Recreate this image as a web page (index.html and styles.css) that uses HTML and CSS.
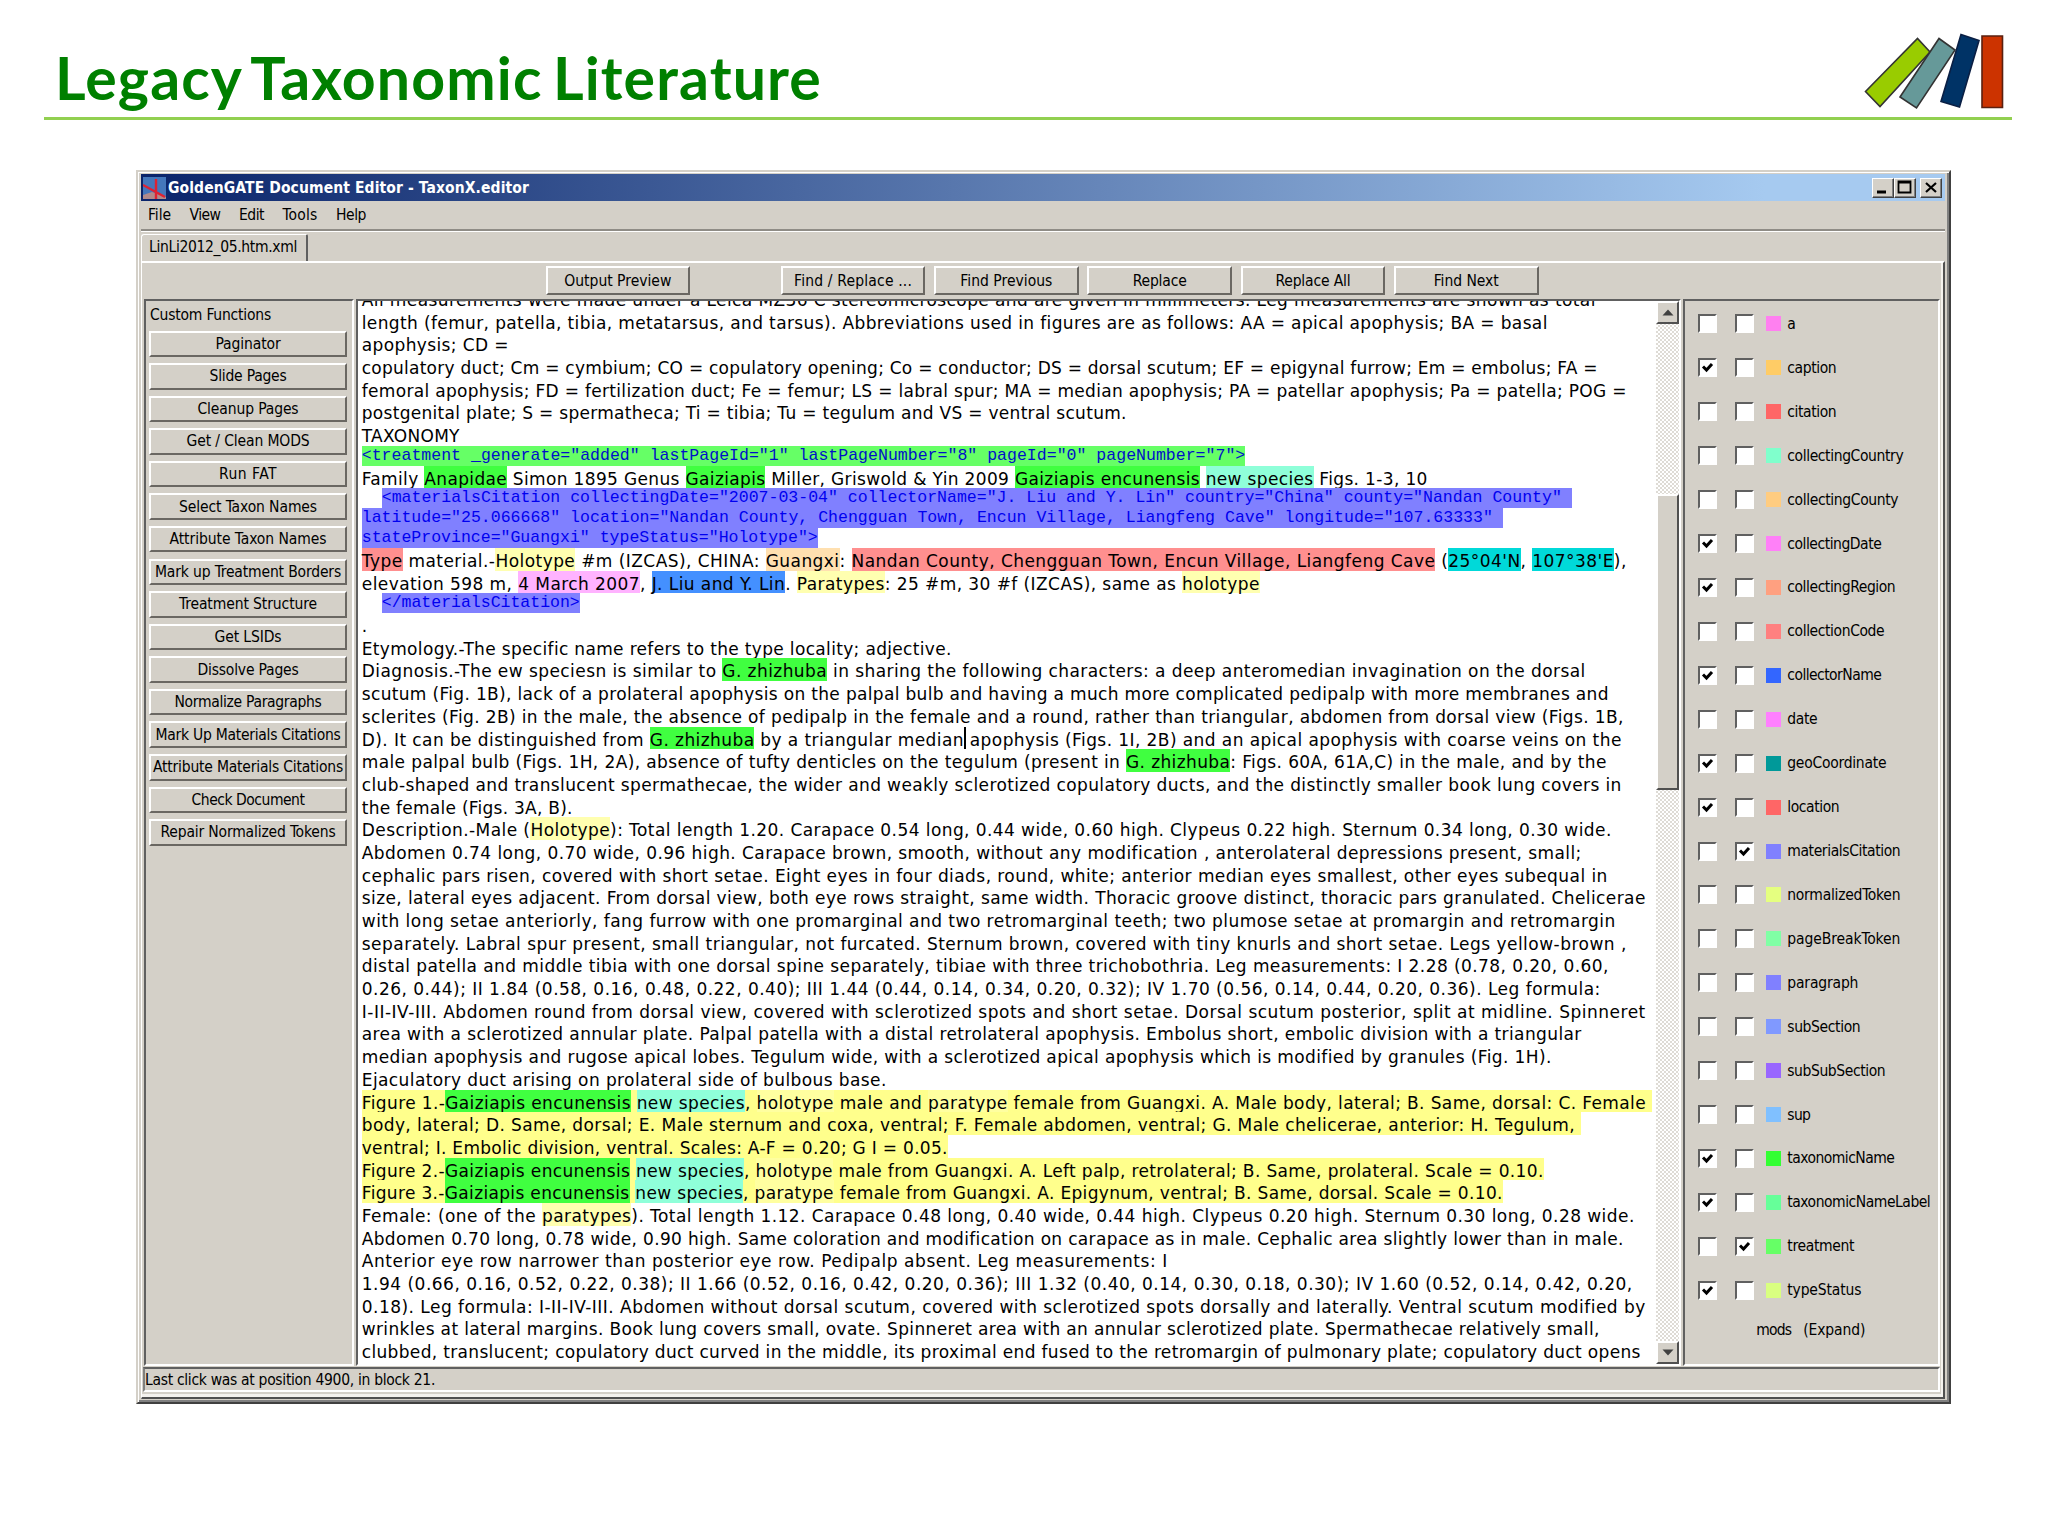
FILE: index.html
```html
<!DOCTYPE html>
<html lang="en">
<head>
<meta charset="UTF-8">
<title>Legacy Taxonomic Literature</title>
<link rel="stylesheet" href="styles.css">
</head>
<body>

<header class="slide-header">
  <h1><span data-w="767">Legacy Taxonomic Literature</span></h1>
  <svg class="logo" width="144" height="80" viewBox="0 0 144 80">
    <g stroke="#333" stroke-width="1.6">
      <path fill="#99cc00" d="M3.500 59.500 L55.500 6.500 L68 20 L18 74.500 Z"/>
      <path fill="#669999" d="M38 65 L77 6.500 L93 18 L54.500 76 Z"/>
      <path fill="#003366" stroke="#0a1f44" d="M79 69.500 L99 2.500 L117 8.500 L97.500 75 Z"/>
      <path fill="#cc3300" stroke="#5a2010" d="M120 4 H140.500 V75.500 H120 Z"/>
    </g>
  </svg>
</header>

<div class="window">
  <div class="titlebar">
    <svg class="app-icon" width="23" height="22" viewBox="0 0 23 22">
      <rect width="23" height="22" fill="#4477bb"/>
      <path d="M0 22 V18 L9 15 L23 20 V22 Z" fill="#b08a8a"/>
      <path d="M13 2 V22 M0 8 L22 20" stroke="#dd2233" stroke-width="2.400" fill="none"/>
    </svg>
    <span class="title" data-w="361">GoldenGATE Document Editor - TaxonX.editor</span>
    <div class="win-buttons">
      <span class="win-btn"><svg width="20" height="18"><path d="M4 13h9" stroke="#000" stroke-width="3"/></svg></span>
      <span class="win-btn"><svg width="20" height="18"><path d="M3.500 2.500h12v11h-12z M3 3.500h13" stroke="#000" stroke-width="1.800" fill="none"/></svg></span>
      <span class="win-btn close"><svg width="20" height="18"><path d="M5 4l10 9M15 4l-10 9" stroke="#000" stroke-width="2.200"/></svg></span>
    </div>
  </div>

  <nav class="menu">
    <span data-w="23">File</span><span data-w="31">View</span><span data-w="25">Edit</span><span data-w="35">Tools</span><span data-w="30">Help</span>
  </nav>

  <div class="tabs"><div class="tab"><span data-w="148">LinLi2012_05.htm.xml</span></div></div>

  <div class="tab-page">
    <div class="toolbar">
      <button class="first"><span data-w="107">Output Preview</span></button>
      <button><span data-w="118">Find / Replace ...</span></button>
      <button><span data-w="92">Find Previous</span></button>
      <button><span data-w="54">Replace</span></button>
      <button><span data-w="75">Replace All</span></button>
      <button><span data-w="65">Find Next</span></button>
    </div>

    <div class="panes">
      <aside class="functions">
        <div class="heading"><span data-w="121">Custom Functions</span></div>
        <button><span data-w="65">Paginator</span></button>
        <button><span data-w="77">Slide Pages</span></button>
        <button><span data-w="101">Cleanup Pages</span></button>
        <button><span data-w="123">Get / Clean MODS</span></button>
        <button><span data-w="58">Run FAT</span></button>
        <button><span data-w="138">Select Taxon Names</span></button>
        <button><span data-w="157">Attribute Taxon Names</span></button>
        <button><span data-w="186">Mark up Treatment Borders</span></button>
        <button><span data-w="138">Treatment Structure</span></button>
        <button><span data-w="67">Get LSIDs</span></button>
        <button><span data-w="101">Dissolve Pages</span></button>
        <button><span data-w="147">Normalize Paragraphs</span></button>
        <button><span data-w="185">Mark Up Materials Citations</span></button>
        <button><span data-w="190">Attribute Materials Citations</span></button>
        <button><span data-w="113">Check Document</span></button>
        <button><span data-w="175">Repair Normalized Tokens</span></button>
      </aside>

      <main class="editor">
        <div class="text">
<p data-w="1234">All measurements were made under a Leica MZ36 C stereomicroscope and are given in millimeters. Leg measurements are shown as total</p>
<p data-w="1186">length (femur, patella, tibia, metatarsus, and tarsus). Abbreviations used in figures are as follows: AA = apical apophysis; BA = basal</p>
<p data-w="147">apophysis; CD =</p>
<p data-w="1236">copulatory duct; Cm = cymbium; CO = copulatory opening; Co = conductor; DS = dorsal scutum; EF = epigynal furrow; Em = embolus; FA =</p>
<p data-w="1265">femoral apophysis; FD = fertilization duct; Fe = femur; LS = labral spur; MA = median apophysis; PA = patellar apophysis; Pa = patella; POG =</p>
<p data-w="765">postgenital plate; S = spermatheca; Ti = tibia; Tu = tegulum and VS = ventral scutum.</p>
<p data-w="98">TAXONOMY</p>
<p class="tag treatment" data-w="883.5">&lt;treatment _generate="added" lastPageId="1" lastPageNumber="8" pageId="0" pageNumber="7"&gt;</p>
<p data-w="1066">Family <b class="taxon">Anapidae</b> Simon 1895 Genus <b class="taxon">Gaiziapis</b> Miller, Griswold &amp; Yin 2009 <b class="taxon">Gaiziapis encunensis</b> <b class="label">new species</b> Figs. 1-3, 10</p>
<p class="tag materials indent" data-w="1190">&lt;materialsCitation collectingDate="2007-03-04" collectorName="J. Liu and Y. Lin" country="China" county="Nandan County" </p>
<p class="tag materials" data-w="1141">latitude="25.066668" location="Nandan County, Chengguan Town, Encun Village, Liangfeng Cave" longitude="107.63333" </p>
<p class="tag materials" data-w="456">stateProvince="Guangxi" typeStatus="Holotype"&gt;</p>
<p data-w="1265"><b class="code">Type</b> material.-<b class="status">Holotype</b> #m (IZCAS), CHINA: <b class="region">Guangxi</b>: <b class="location">Nandan County, Chengguan Town, Encun Village, Liangfeng Cave</b> (<b class="geo">25°04'N</b>, <b class="geo">107°38'E</b>),</p>
<p data-w="898">elevation 598 m, <b class="date">4 March 2007</b>, <b class="collector">J. Liu and Y. Lin</b>. <b class="status">Paratypes</b>: 25 #m, 30 #f (IZCAS), same as <b class="status">holotype</b></p>
<p class="tag materials indent" data-w="198">&lt;/materialsCitation&gt;</p>
<p>.</p>
<p data-w="590">Etymology.-The specific name refers to the type locality; adjective.</p>
<p data-w="1224">Diagnosis.-The ew speciesn is similar to <b class="taxon">G. zhizhuba</b> in sharing the following characters: a deep anteromedian invagination on the dorsal</p>
<p data-w="1247">scutum (Fig. 1B), lack of a prolateral apophysis on the palpal bulb and having a much more complicated pedipalp with more membranes and</p>
<p data-w="1262">sclerites (Fig. 2B) in the male, the absence of pedipalp in the female and a round, rather than triangular, abdomen from dorsal view (Figs. 1B,</p>
<p data-w="1260">D). It can be distinguished from <b class="taxon">G. zhizhuba</b> by a triangular median<i class="caret"></i> apophysis (Figs. 1I, 2B) and an apical apophysis with coarse veins on the</p>
<p data-w="1245">male palpal bulb (Figs. 1H, 2A), absence of tufty denticles on the tegulum (present in <b class="taxon">G. zhizhuba</b>: Figs. 60A, 61A,C) in the male, and by the</p>
<p data-w="1260">club-shaped and translucent spermathecae, the wider and weakly sclerotized copulatory ducts, and the distinctly smaller book lung covers in</p>
<p data-w="211">the female (Figs. 3A, B).</p>
<p data-w="1250">Description.-Male (<b class="status">Holotype</b>): Total length 1.20. Carapace 0.54 long, 0.44 wide, 0.60 high. Clypeus 0.22 high. Sternum 0.34 long, 0.30 wide.</p>
<p data-w="1220">Abdomen 0.74 long, 0.70 wide, 0.96 high. Carapace brown, smooth, without any modification , anterolateral depressions present, small;</p>
<p data-w="1246">cephalic pars risen, covered with short setae. Eight eyes in four diads, round, white; anterior median eyes smallest, other eyes subequal in</p>
<p data-w="1284">size, lateral eyes adjacent. From dorsal view, both eye rows straight, same width. Thoracic groove distinct, thoracic pars granulated. Chelicerae</p>
<p data-w="1254">with long setae anteriorly, fang furrow with one promarginal and two retromarginal teeth; two plumose setae at promargin and retromargin</p>
<p data-w="1265">separately. Labral spur present, small triangular, not furcated. Sternum brown, covered with tiny knurls and short setae. Legs yellow-brown ,</p>
<p data-w="1247">distal patella and middle tibia with one dorsal spine separately, tibiae with three trichobothria. Leg measurements: I 2.28 (0.78, 0.20, 0.60,</p>
<p data-w="1239">0.26, 0.44); II 1.84 (0.58, 0.16, 0.48, 0.22, 0.40); III 1.44 (0.44, 0.14, 0.34, 0.20, 0.32); IV 1.70 (0.56, 0.14, 0.44, 0.20, 0.36). Leg formula:</p>
<p data-w="1284">I-II-IV-III. Abdomen round from dorsal view, covered with sclerotized spots and short setae. Dorsal scutum posterior, split at midline. Spinneret</p>
<p data-w="1220">area with a sclerotized annular plate. Palpal patella with a distal retrolateral apophysis. Embolus short, embolic division with a triangular</p>
<p data-w="1190">median apophysis and rugose apical lobes. Tegulum wide, with a sclerotized apical apophysis which is modified by granules (Fig. 1H).</p>
<p data-w="525">Ejaculatory duct arising on prolateral side of bulbous base.</p>
<p class="caption" data-w="1290">Figure 1.-<b class="taxon">Gaiziapis encunensis</b> <b class="label">new species</b>, <b class="pale">holotype</b> male and <b class="pale">paratype</b> female from Guangxi. A. Male body, lateral; B. Same, dorsal: C. Female </p>
<p class="caption" data-w="1219">body, lateral; D. Same, dorsal; E. Male sternum and coxa, ventral; F. Female abdomen, ventral; G. Male chelicerae, anterior: H. Tegulum, </p>
<p class="caption" data-w="586">ventral; I. Embolic division, ventral. Scales: A-F = 0.20; G I = 0.05.</p>
<p class="caption" data-w="1182">Figure 2.-<b class="taxon">Gaiziapis encunensis</b> <b class="label">new species</b>, <b class="pale">holotype</b> male from Guangxi. A. Left palp, retrolateral; B. Same, prolateral. Scale = 0.10.</p>
<p class="caption" data-w="1141">Figure 3.-<b class="taxon">Gaiziapis encunensis</b> <b class="label">new species</b>, <b class="pale">paratype</b> female from Guangxi. A. Epigynum, ventral; B. Same, dorsal. Scale = 0.10.</p>
<p data-w="1273">Female: (one of the <b class="status">paratypes</b>). Total length 1.12. Carapace 0.48 long, 0.40 wide, 0.44 high. Clypeus 0.20 high. Sternum 0.30 long, 0.28 wide.</p>
<p data-w="1262">Abdomen 0.70 long, 0.78 wide, 0.90 high. Same coloration and modification on carapace as in male. Cephalic area slightly lower than in male.</p>
<p data-w="806">Anterior eye row narrower than posterior eye row. Pedipalp absent. Leg measurements: I</p>
<p data-w="1271">1.94 (0.66, 0.16, 0.52, 0.22, 0.38); II 1.66 (0.52, 0.16, 0.42, 0.20, 0.36); III 1.32 (0.40, 0.14, 0.30, 0.18, 0.30); IV 1.60 (0.52, 0.14, 0.42, 0.20,</p>
<p data-w="1284">0.18). Leg formula: I-II-IV-III. Abdomen without dorsal scutum, covered with sclerotized spots dorsally and laterally. Ventral scutum modified by</p>
<p data-w="1238">wrinkles at lateral margins. Book lung covers small, ovate. Spinneret area with an annular sclerotized plate. Spermathecae relatively small,</p>
<p data-w="1279">clubbed, translucent; copulatory duct curved in the middle, its proximal end fused to the retromargin of pulmonary plate; copulatory duct opens</p>
        </div>
        <div class="scrollbar">
          <span class="arrow"><svg width="12" height="7"><path d="M6 0.500 L11.500 6.500 H0.500 Z"/></svg></span>
          <span class="thumb"></span>
          <span class="arrow"><svg width="12" height="7"><path d="M0.500 0.500 H11.500 L6 6.500 Z"/></svg></span>
        </div>
      </main>

      <aside class="annotations">
        <div id="tag-list"></div>
        <div class="mods"><span data-w="35">mods</span><span data-w="62">(Expand)</span></div>
      </aside>
    </div>

    <footer class="statusbar"><span data-w="290">Last click was at position 4900, in block 21.</span></footer>
  </div>
</div>

<script src="script.js"></script>
</body>
</html>
```

FILE: styles.css
```css
* {
  box-sizing: border-box;
}
body {
  margin: 0;
  width: 2048px;
  height: 1536px;
  overflow: hidden;
  background: #fff;
  font-family: "DejaVu Sans Condensed", "DejaVu Sans", sans-serif;
  font-stretch: condensed;
  font-size: 15.500px;
  color: #000;
}
[data-w] {
  white-space: pre;
}

/* slide heading */
.slide-header {
  display: flex;
  justify-content: space-between;
  align-items: flex-start;
  height: 120px;
  margin: 0 36px 0 44px;
  padding: 32px 6px 0 11px;
  border-bottom: 3px solid #92d050;
}
h1 {
  margin: 0;
  font: bold 59px/91px Lato, sans-serif;
  word-spacing: -5px;
  color: #008000;
}

/* window frame */
.window {
  display: flex;
  flex-direction: column;
  width: 1815px;
  height: 1234px;
  margin: 50px 0 0 136px;
  padding: 2px 4px 3px 3px;
  background: #d4d0c8;
  border: 2px solid;
  border-color: #d4d0c8 #404040 #404040 #d4d0c8;
  box-shadow: inset 1px 1px #fff, inset -2px -2px #808080;
}
.titlebar {
  display: flex;
  align-items: center;
  height: 27px;
  flex: none;
  padding: 0 3px 0 2px;
  background: linear-gradient(to right, #0a246a, #a6caf0 90%);
}
.title {
  margin-left: 2px;
  padding-top: 1px;
  font-weight: bold;
  color: #fff;
}
.win-buttons {
  display: flex;
  margin-left: auto;
}
.win-btn {
  width: 22px;
  height: 20px;
  background: #d4d0c8;
  border: 1px solid;
  border-color: #fff #404040 #404040 #fff;
  box-shadow: inset -1px -1px #808080;
}
.win-btn svg {
  display: block;
}
.close {
  margin-left: 4px;
}
.menu {
  display: flex;
  align-items: center;
  gap: 18.500px;
  height: 30px;
  flex: none;
  padding: 0 0 1px 7px;
  border-bottom: 2px solid #8f8c86;
  box-shadow: 0 1px #fff;
}

.tabs {
  display: flex;
  height: 30px;
  flex: none;
  padding-top: 3px;
}
.tab {
  width: 167px;
  height: 27px;
  padding-left: 7px;
  line-height: 25px;
  border: 1px solid #fff;
  border-bottom: 0;
  border-right: 2px solid #606060;
  border-radius: 3px 2px 0 0;
}
.tab-page {
  flex: 1;
  display: flex;
  flex-direction: column;
  padding: 0 3px 3px 2px;
  border: solid;
  border-width: 2px 2px 2px 1px;
  border-color: #fff #505050 #505050 #fff;
  box-shadow: inset -2px -3px #f4f2ee;
}
.toolbar {
  display: flex;
  gap: 8.700px;
  height: 36px;
  flex: none;
  padding: 3px 0 0 401.500px;
}
button {
  display: flex;
  justify-content: center;
  align-items: center;
  margin: 0;
  padding: 0;
  font: inherit;
  color: #000;
  background: #d4d0c8;
  border: 2px solid;
  border-color: #fff #6a6762 #6a6762 #fff;
}
.toolbar button {
  width: 144.600px;
  height: 29px;
}
.toolbar .first {
  margin-right: 82px;
}

/* three panes */
.panes {
  display: flex;
  gap: 2px;
  height: 1067px;
  flex: none;
}
.functions, .editor, .annotations {
  border: 2px solid;
  border-color: #606060 #fff #fff #606060;
}
.functions {
  width: 210px;
  padding: 2px 3px 0;
}
.functions .heading {
  height: 27.500px;
  padding-left: 1px;
  line-height: 24px;
}
.functions button {
  width: 198px;
  height: 26.500px;
  margin-bottom: 6.080px;
}
.editor {
  display: flex;
  justify-content: space-between;
  width: 1327px;
  background: #fff;
}
.text {
  display: flex;
  flex-direction: column;
  align-items: flex-start;
  height: 1063px;
  padding-left: 4px;
  overflow: hidden;
  font-family: "DejaVu Sans", sans-serif;
  font-stretch: normal;
  font-size: 17px;
}
.text p {
  flex: none;
  height: 22.690px;
  margin: 0;
  line-height: 27px;
}
.text p:first-child {
  margin-top: -14px;
}
.text b {
  display: inline-block;
  height: 22.690px;
  vertical-align: top;
  font-weight: normal;
}
.text .tag {
  height: 19.850px;
  line-height: 20.500px;
  font-family: "Liberation Mono", monospace;
  font-size: 16.540px;
  color: #0000f0;
}
.text .indent {
  margin-left: 20px;
}
.text .treatment {
  background: #66ff66;
  color: #0010c8;
}
.materials {
  background: #8080ff;
}
.caption {
  background: #ffff8c;
}
.taxon {
  background: #40ff40;
}
.label {
  background: #8fffd9;
}
.code, .location {
  background: #ff8f8f;
}
.status {
  background: #ffffb0;
}
.region {
  background: #ffe0b0;
}
.geo {
  background: #00d9d9;
}
.date {
  background: #ffb3ff;
}
.collector {
  background: #4490ff;
}
.pale {
  background: #ffffa0;
}
.caret {
  display: inline-block;
  width: 2px;
  height: 22px;
  margin-right: -2px;
  vertical-align: top;
  background: #000;
}

.scrollbar {
  display: flex;
  flex-direction: column;
  justify-content: space-between;
  width: 23px;
  background: repeating-conic-gradient(#dedbd5 0 25%, #fff 0 50%) 0 0 / 4px 4px;
}
.arrow, .thumb {
  background: #d4d0c8;
  border: 2px solid;
  border-color: #fff #505050 #505050 #fff;
}
.arrow {
  display: flex;
  justify-content: center;
  align-items: center;
  height: 23px;
}
.arrow path {
  fill: #404040;
}
.thumb {
  height: 296px;
  margin-bottom: 382px;
}

.annotations {
  width: 257px;
  padding: 1px 0 0 13px;
}
.row {
  display: flex;
  align-items: center;
  height: 43.930px;
}
.check {
  width: 19px;
  height: 19px;
  margin-right: 18px;
  background: #fff;
  border: 2px solid;
  border-color: #606060 #fff #fff #606060;
}
.check svg {
  display: block;
}
.check + .check {
  margin-right: 12px;
}
.swatch {
  width: 15px;
  height: 15px;
  margin-right: 6px;
}
.mods {
  display: flex;
  gap: 12px;
  padding: 9px 0 0 58px;
}

.statusbar {
  height: 25px;
  margin-top: 1px;
  margin-left: -1px;
  line-height: 23px;
  border: 2px solid;
  border-color: #606060 #fff #fff #808080;
}
```

FILE: script.js
```js
// [name, colour, shown, tagged, text width]
const tags = [
  ['a', '#ff80f0', 0, 0, 8],
  ['caption', '#ffcc66', 1, 0, 49],
  ['citation', '#ff6666', 0, 0, 49],
  ['collectingCountry', '#80ffcc', 0, 0, 116],
  ['collectingCounty', '#ffcc80', 0, 0, 111],
  ['collectingDate', '#ff80f8', 1, 0, 94],
  ['collectingRegion', '#ffa080', 1, 0, 108],
  ['collectionCode', '#ff8080', 0, 0, 97],
  ['collectorName', '#3366ff', 1, 0, 94],
  ['date', '#ff80ff', 0, 0, 30],
  ['geoCoordinate', '#009999', 1, 0, 99],
  ['location', '#ff6666', 1, 0, 52],
  ['materialsCitation', '#8080ff', 0, 1, 113],
  ['normalizedToken', '#e5ff80', 0, 0, 113],
  ['pageBreakToken', '#80ffa5', 0, 0, 113],
  ['paragraph', '#8080ff', 0, 0, 71],
  ['subSection', '#8099ff', 0, 0, 73],
  ['subSubSection', '#9966ff', 0, 0, 98],
  ['sup', '#80c0ff', 0, 0, 23],
  ['taxonomicName', '#33ff33', 1, 0, 107],
  ['taxonomicNameLabel', '#66ff99', 1, 0, 143],
  ['treatment', '#66ff66', 0, 1, 67],
  ['typeStatus', '#d9ff80', 1, 0, 74]
];

const tick = '<svg width="15" height="15"><path d="M3 6.500 L6.500 10 L12 4" fill="none" stroke="#000" stroke-width="3"/></svg>';

document.getElementById('tag-list').innerHTML = tags.map(([name, color, shown, tagged, w]) => `
  <div class="row">
    <span class="check">${shown ? tick : ''}</span>
    <span class="check">${tagged ? tick : ''}</span>
    <span class="swatch" style="background:${color}"></span>
    <span data-w="${w}">${name}</span>
  </div>`).join('');

// spread the letters of each text over its column width
document.querySelectorAll('[data-w]').forEach(el => {
  const extra = Number(el.dataset.w) - el.getBoundingClientRect().width;
  el.style.letterSpacing = (extra / el.textContent.length) + 'px';
});
```
